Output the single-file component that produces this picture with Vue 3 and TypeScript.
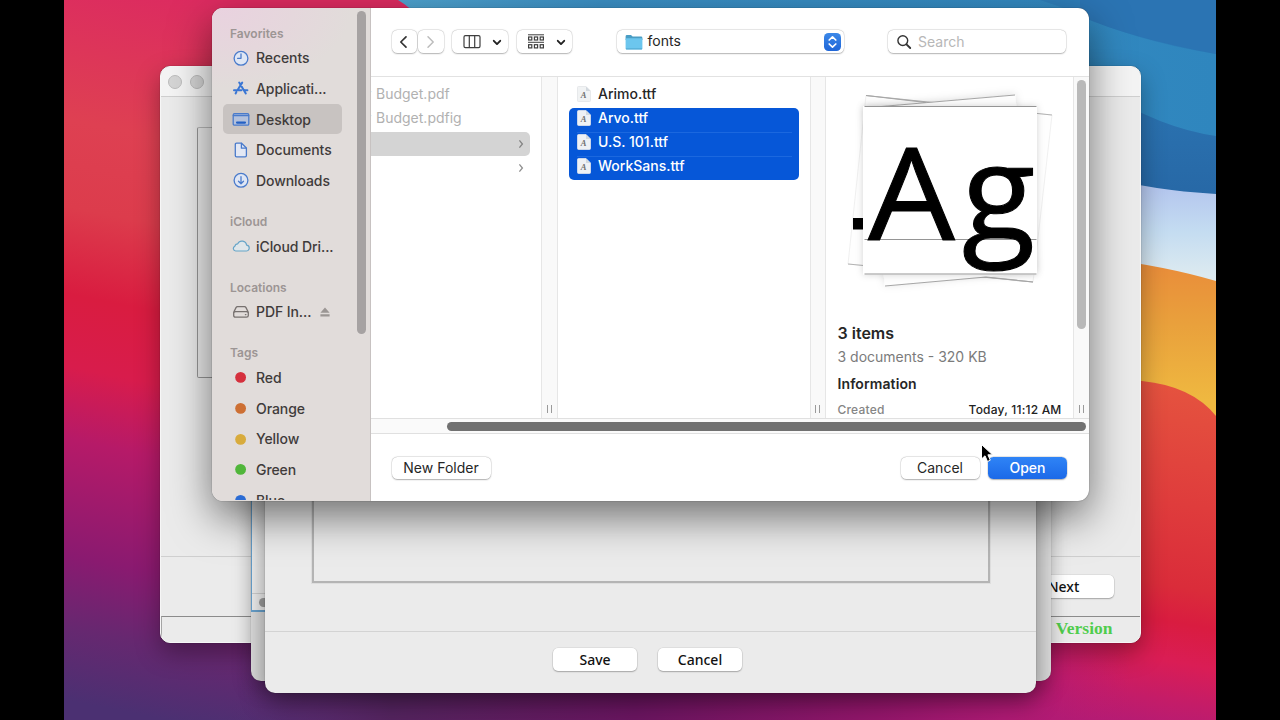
<script setup lang="ts">
interface SideItem {
  label: string
  icon: 'clock' | 'apps' | 'desktop' | 'doc' | 'download' | 'cloud' | 'disk' | 'tag'
  active?: boolean
  eject?: boolean
  color?: string
}
interface SideSection {
  title: string
  items: SideItem[]
}
interface FontFile {
  name: string
  selected: boolean
}

const sections: SideSection[] = [
  {
    title: 'Favorites',
    items: [
      { label: 'Recents', icon: 'clock' },
      { label: 'Applicati...', icon: 'apps' },
      { label: 'Desktop', icon: 'desktop', active: true },
      { label: 'Documents', icon: 'doc' },
      { label: 'Downloads', icon: 'download' },
    ],
  },
  { title: 'iCloud', items: [{ label: 'iCloud Dri...', icon: 'cloud' }] },
  { title: 'Locations', items: [{ label: 'PDF In...', icon: 'disk', eject: true }] },
  {
    title: 'Tags',
    items: [
      { label: 'Red', icon: 'tag', color: '#d5303d' },
      { label: 'Orange', icon: 'tag', color: '#cd6f33' },
      { label: 'Yellow', icon: 'tag', color: '#d8ab3c' },
      { label: 'Green', icon: 'tag', color: '#50b63a' },
      { label: 'Blue', icon: 'tag', color: '#2b6cd4' },
    ],
  },
]

const files: FontFile[] = [
  { name: 'Arimo.ttf', selected: false },
  { name: 'Arvo.ttf', selected: true },
  { name: 'U.S. 101.ttf', selected: true },
  { name: 'WorkSans.ttf', selected: true },
]
</script>

<template>
  <div class="screen">
    <svg class="wallpaper" viewBox="64 0 1152 720" width="1152" height="720">
      <defs>
        <linearGradient id="wl" gradientUnits="userSpaceOnUse" x1="200" y1="0" x2="64" y2="700">
          <stop offset="0" stop-color="#dc2b60" />
          <stop offset=".2" stop-color="#de4052" />
          <stop offset=".32" stop-color="#dc3c4c" />
          <stop offset=".44" stop-color="#d91c40" />
          <stop offset=".54" stop-color="#d81c4c" />
          <stop offset=".64" stop-color="#b61a68" />
          <stop offset=".8" stop-color="#8a1a70" />
          <stop offset=".9" stop-color="#662870" />
          <stop offset="1" stop-color="#4b3072" />
        </linearGradient>
        <linearGradient id="wb" gradientUnits="userSpaceOnUse" x1="64" y1="0" x2="1216" y2="0">
          <stop offset="0" stop-color="#4a3274" />
          <stop offset=".1" stop-color="#5f2a72" />
          <stop offset=".3" stop-color="#54245f" />
          <stop offset=".45" stop-color="#6a1560" />
          <stop offset=".62" stop-color="#8c1567" />
          <stop offset=".8" stop-color="#ae1a74" />
          <stop offset="1" stop-color="#c01c68" />
        </linearGradient>
        <linearGradient id="blue" x1="0" y1="0" x2="1" y2="0">
          <stop offset="0" stop-color="#4fa3cf" />
          <stop offset=".25" stop-color="#3b8fc4" />
          <stop offset="1" stop-color="#2f86be" />
        </linearGradient>
        <linearGradient id="deep" x1="0" y1="0" x2="0" y2="1">
          <stop offset="0" stop-color="#2b74b2" />
          <stop offset="1" stop-color="#2768a6" />
        </linearGradient>
        <linearGradient id="sky" gradientUnits="userSpaceOnUse" x1="0" y1="188" x2="0" y2="275">
          <stop offset="0" stop-color="#b4c6ee" />
          <stop offset=".5" stop-color="#c4dcf1" />
          <stop offset="1" stop-color="#dceaf0" />
        </linearGradient>
        <linearGradient id="amber" gradientUnits="userSpaceOnUse" x1="0" y1="265" x2="0" y2="400">
          <stop offset="0" stop-color="#e98d3a" />
          <stop offset=".45" stop-color="#e9a13c" />
          <stop offset="1" stop-color="#efb840" />
        </linearGradient>
        <linearGradient id="coral" gradientUnits="userSpaceOnUse" x1="1190" y1="380" x2="1130" y2="730">
          <stop offset="0" stop-color="#e5543f" />
          <stop offset=".35" stop-color="#df3c3c" />
          <stop offset=".58" stop-color="#da2c3a" />
          <stop offset=".68" stop-color="#d91c40" />
          <stop offset=".79" stop-color="#da1d55" />
          <stop offset=".9" stop-color="#c41c68" />
          <stop offset="1" stop-color="#b21b76" />
        </linearGradient>
        <linearGradient id="floor" gradientUnits="userSpaceOnUse" x1="230" y1="0" x2="1130" y2="0">
          <stop offset="0" stop-color="#5a2a70" stop-opacity="0" />
          <stop offset=".18" stop-color="#54245f" />
          <stop offset=".45" stop-color="#6a1560" />
          <stop offset=".72" stop-color="#94166b" />
          <stop offset=".86" stop-color="#ae1a74" />
          <stop offset="1" stop-color="#b81b70" stop-opacity="0" />
        </linearGradient>
      </defs>
      <rect x="64" y="0" width="500" height="720" fill="url(#wl)" />
      <path d="M540 560H1040V720H540Z" fill="url(#wb)" />
      <path d="M398 0H1216V200H520Q450 30 398 0Z" fill="url(#blue)" />
      <path d="M690 0H1216V54Q1130 40 1070 10L1040 0Z" fill="#2c79b5" opacity=".7" />
      <path d="M1080 0H1216V54Q1130 38 1080 16Z" fill="#2b74b3" />
      <path d="M1100 90Q1160 128 1216 136V196H1100Z" fill="url(#deep)" />
      <path d="M1100 176Q1150 190 1216 194V285H1100Z" fill="url(#sky)" />
      <path d="M1100 258Q1165 266 1216 281V440H1100Z" fill="url(#amber)" />
      <path d="M1030 381H1142Q1192 386 1216 416V720H1030Z" fill="url(#coral)" />
      <path d="M230 600H1130V720H230Z" fill="url(#floor)" />
    </svg>

    <section class="window main-window">
      <header class="titlebar"><i class="light" /><i class="light" /></header>
      <div class="main-body"><div class="groupbox" /></div>
      <div class="wizard-row"><button class="java-btn next">Next</button></div>
      <footer class="status"><span>Version</span></footer>
    </section>

    <section class="window middle-sheet">
      <div class="list-pane"><div class="pane-scroll"><i /></div></div>
    </section>

    <section class="window front-sheet">
      <div class="front-body"><div class="inset" /></div>
      <footer class="front-actions">
        <button class="java-btn">Save</button>
        <button class="java-btn">Cancel</button>
      </footer>
    </section>

    <section class="window dialog">
      <aside class="sidebar">
        <nav class="side-list">
          <template v-for="s in sections" :key="s.title">
            <h3 class="side-title">{{ s.title }}</h3>
            <div v-for="it in s.items" :key="it.label" class="side-item" :class="{ active: it.active }">
              <svg class="side-icon" viewBox="0 0 18 18" width="18" height="18" fill="none" stroke="#4a7bcb" stroke-width="1.3" stroke-linecap="round" stroke-linejoin="round">
                <template v-if="it.icon === 'clock'">
                  <circle cx="9" cy="9.3" r="6.9" fill="#dfe6f4" />
                  <path d="M9 4.900V9.300H5.6" />
                </template>
                <template v-else-if="it.icon === 'apps'">
                  <path d="M7.2 3.6L13.8 14.4M10.2 3.6L5.6 11M4.4 13L3.6 14.4M2 11.2H9.4M12.4 11.2H15.4" stroke-width="2" stroke="#3a76d4" />
                </template>
                <template v-else-if="it.icon === 'desktop'">
                  <rect x="1.2" y="3.600" width="15.6" height="11.6" rx="1.3" fill="#b3c1dc" />
                  <path d="M1.5 5.500H16.5" stroke-width="1.6" />
                  <path d="M5 12.600H13" stroke-width="2.1" stroke="#2360c4" />
                </template>
                <template v-else-if="it.icon === 'doc'">
                  <path d="M4.6 2.2H9.6L14.4 7V14.6Q14.4 15.9 13.1 15.9H4.6Q3.3 15.9 3.3 14.6V3.5Q3.3 2.2 4.6 2.2Z" fill="#e3e8f4" />
                  <path d="M9.4 2.4V7.2H14.2" />
                </template>
                <template v-else-if="it.icon === 'download'">
                  <circle cx="9" cy="9.3" r="6.9" fill="#dfe6f4" />
                  <path d="M9 5.700V12.500M6.5 10.200L9 12.700L11.5 10.200" />
                </template>
                <template v-else-if="it.icon === 'cloud'">
                  <path d="M3.700 14H14A2.900 2.900 0 0 0 14.600 8.200A4.700 4.700 0 0 0 5.700 6.800A2.900 2.900 0 0 0 2.900 9.200A2.500 2.500 0 0 0 3.700 14Z" stroke="#67a5c8" fill="#dfe6ea" stroke-width="1.200" />
                </template>
                <template v-else-if="it.icon === 'disk'">
                  <path d="M5.6 3.6H12.4Q13.5 3.6 14 4.6L16.3 9.2V12.4Q16.3 14.2 14.5 14.2H3.5Q1.7 14.2 1.7 12.4V9.2L4 4.6Q4.5 3.6 5.6 3.6ZM2 9.4Q2.6 8.6 3.6 8.6H14.4Q15.4 8.6 16 9.4" stroke="#77716f" />
                  <path d="M13.4 11.6H13.9" stroke="#77716f" />
                </template>
                <circle v-else cx="8.6" cy="9.4" r="5.4" :fill="it.color" stroke="none" />
              </svg>
              <span>{{ it.label }}</span>
              <svg v-if="it.eject" class="eject" viewBox="0 0 10 10" width="10" height="10">
                <path d="M5 .5L9.6 5.8H.4ZM.4 7.2H9.6V9.6H.4Z" fill="#9b9694" />
              </svg>
            </div>
          </template>
        </nav>
        <i class="side-thumb" />
      </aside>

      <div class="panel">
        <header class="toolbar">
          <button class="tool nav">
            <svg viewBox="0 0 10 14" width="10" height="14"><path d="M7 1.8L1.8 7L7 12.2" fill="none" stroke="#333" stroke-width="1.7" stroke-linecap="round" stroke-linejoin="round" /></svg>
          </button>
          <button class="tool nav">
            <svg viewBox="0 0 10 14" width="10" height="14"><path d="M2 1.8L7.2 7L2 12.2" fill="none" stroke="#bcbcbc" stroke-width="1.5" stroke-linecap="round" stroke-linejoin="round" /></svg>
          </button>
          <button class="tool view">
            <svg viewBox="0 0 18 14" width="18" height="14" fill="none" stroke="#3f3f3f" stroke-width="1.2"><rect x="1" y=".6" width="16" height="12" rx="1.4" /><path d="M6.3 .6V12.600M11.7 .6V12.600" /></svg>
            <svg class="chev" viewBox="0 0 10 8" width="10" height="8"><path d="M1.8 1.8L5 5.1L8.2 1.8" fill="none" stroke="#222" stroke-width="1.9" stroke-linecap="round" stroke-linejoin="round" /></svg>
          </button>
          <button class="tool group">
            <svg viewBox="0 0 18 16" width="18" height="16" fill="none" stroke="#3f3f3f" stroke-width="1.2">
              <path d="M1 .8H17M1 8.300H17" stroke-width="1" />
              <rect x="1.6" y="3" width="3.2" height="3" /><rect x="7.4" y="3" width="3.2" height="3" /><rect x="13.2" y="3" width="3.2" height="3" />
              <rect x="1.6" y="10.7" width="3.2" height="3.2" /><rect x="7.4" y="10.7" width="3.2" height="3.2" /><rect x="13.2" y="10.7" width="3.2" height="3.2" />
            </svg>
            <svg class="chev" viewBox="0 0 10 8" width="10" height="8"><path d="M1.8 1.8L5 5.1L8.2 1.8" fill="none" stroke="#222" stroke-width="1.9" stroke-linecap="round" stroke-linejoin="round" /></svg>
          </button>
          <div class="tool path">
            <svg viewBox="0 0 18 16" width="18" height="16">
              <path d="M.6 2.4Q.6 1 2 1H6L7.6 2.6H16Q17.4 2.6 17.4 4V6H.6Z" fill="#4a9dc4" />
              <rect x=".6" y="4.2" width="16.8" height="11.2" rx="1.2" fill="#6cc6ee" />
              <path d="M1 14.9H17" stroke="#4fa6cf" stroke-width="1" />
            </svg>
            <span>fonts</span>
            <i class="stepper">
              <svg viewBox="0 0 17 18" width="17" height="18"><path d="M5.2 7L8.5 3.9L11.8 7M5.2 11L8.5 14.1L11.8 11" fill="none" stroke="#fff" stroke-width="1.7" stroke-linecap="round" stroke-linejoin="round" /></svg>
            </i>
          </div>
          <div class="tool search">
            <svg viewBox="0 0 16 16" width="16" height="16" fill="none" stroke="#333" stroke-linecap="round"><circle cx="6.8" cy="6.6" r="4.9" stroke-width="1.4" /><path d="M10.5 10.3L14.2 14" stroke-width="1.9" /></svg>
            <span>Search</span>
          </div>
        </header>

        <div class="columns">
          <div class="col first">
            <div class="dim"><span>r Budget.pdf</span></div>
            <div class="dim"><span>r Budget.pdfig</span></div>
            <div class="folder picked"><svg viewBox="0 0 6 10" width="6" height="10"><path d="M1.4 1.4L4.4 5L1.4 8.6" fill="none" stroke="#838383" stroke-width="1.3" /></svg></div>
            <div class="folder"><svg viewBox="0 0 6 10" width="6" height="10"><path d="M1.4 1.4L4.4 5L1.4 8.6" fill="none" stroke="#8f8f8f" stroke-width="1.3" /></svg></div>
          </div>
          <div class="gutter"><i /><i /></div>
          <div class="col second">
            <div v-for="f in files" :key="f.name" class="file" :class="{ selected: f.selected }">
              <svg viewBox="0 0 14 16" width="14" height="16">
                <path d="M1.5 .5H9L13.5 5V14.5Q13.5 15.5 12.5 15.5H1.5Q.5 15.5 .5 14.5V1.5Q.5 .5 1.5 .5Z" :fill="f.selected ? '#eef1f5' : '#f1f3f4'" :stroke="f.selected ? '#dfe5ee' : '#e2e5e7'" stroke-width=".8" />
                <path d="M9 .5V5H13.5Z" fill="#d3d9de" />
                <text x="3.800" y="12" class="mini">A</text>
              </svg>
              <span>{{ f.name }}</span>
            </div>
          </div>
          <div class="gutter mid"><i /><i /></div>
          <div class="col preview">
            <svg class="sheets" viewBox="0 0 216 206" width="216" height="206">
              <defs>
                <filter id="sh" x="-20%" y="-20%" width="140%" height="140%"><feDropShadow dx="0" dy="0" stdDeviation="3.500" flood-opacity=".17" /></filter>
                <filter id="sh2" x="-20%" y="-20%" width="140%" height="140%"><feDropShadow dx="0" dy="-1" stdDeviation="4.500" flood-opacity=".13" /></filter>
              </defs>
              <path d="M40 18.500L226 38L207 205L22 187Z" fill="#fefefe" stroke="#ececec" stroke-width=".8" />
              <path d="M40 18.500L226 38M22 187L207 205" stroke="#b4b4b4" stroke-width="1.100" />
              <path d="M38 31L189 18L210 195L59 209Z" fill="#fdfdfd" filter="url(#sh2)" />
              <path d="M40 18.500L100 25.500M38 31L189 18M59 209L160 200L207 205" fill="none" stroke="#a6a6a6" stroke-width="1.100" />
              <rect x="27" y="141" width="12" height="11.500" fill="#000" />
              <rect x="37" y="29" width="174" height="168.500" fill="#fff" filter="url(#sh)" />
              <path d="M38.500 29.500H210.500M38.500 162.500H210.500M38.500 197H210.500" stroke="#959595" stroke-width="1.200" />
              <g class="specimen">
                <text transform="translate(42 163) scale(1.050 .985)">A</text>
                <text transform="translate(136 161.500) scale(1.030 1)">g</text>
              </g>
            </svg>
            <div class="preview-info">
              <h2>3 items</h2>
              <p>3 documents - 320 KB</p>
              <h4>Information</h4>
              <div class="meta"><span>Created</span><b>Today, 11:12 AM</b></div>
            </div>
          </div>
          <div class="gutter end"><em /><i /><i /></div>
        </div>

        <div class="hscroll"><i /></div>

        <footer class="actions">
          <button class="btn new">New Folder</button>
          <button class="btn cancel">Cancel</button>
          <button class="btn open">Open</button>
        </footer>
      </div>
    </section>

    <svg class="cursor" viewBox="0 0 14 20" width="14" height="20">
      <path d="M1.500 1.500V16L5 12.800L7.500 18.500L10.300 17.200L7.900 11.800H12.500Z" fill="#000" stroke="#fff" stroke-width="1" stroke-linejoin="round" />
    </svg>
  </div>
</template>

<style>
html,
body {
  margin: 0;
  background: #000;
  overflow: hidden;
}
</style>

<style scoped>
* {
  box-sizing: border-box;
}
.screen {
  position: relative;
  width: 1280px;
  height: 720px;
  overflow: hidden;
  background: #000;
  font-family: Inter, "Liberation Sans", sans-serif;
  font-size: 14px;
  color: #262626;
}
.wallpaper {
  display: block;
  margin-left: 64px;
}
h2, h3, h4, p {
  margin: 0;
}
button {
  font: inherit;
  color: inherit;
  border: 0;
  padding: 0;
}
.window {
  position: absolute;
  display: flex;
  flex-direction: column;
  background: #ebebeb;
}

.main-window {
  left: 160px;
  top: 66px;
  width: 981px;
  height: 577px;
  border-radius: 10px;
  overflow: hidden;
  box-shadow: 0 0 1px rgba(0, 0, 0, 0.6), 0 10px 24px rgba(0, 0, 0, 0.34);
  border: 1px solid #f6f6f6;
}
.titlebar {
  height: 30px;
  flex: none;
  display: flex;
  gap: 8px;
  padding: 8px 7px;
  background: #f4f4f4;
  border-bottom: 1px solid #cfcfcf;
}
.light {
  width: 14px;
  height: 14px;
  border-radius: 50%;
  background: #d5d5d5;
  border: 1px solid #bcbcbc;
}
.main-body {
  height: 460px;
  flex: none;
  padding: 30px 36px 0;
  border-bottom: 1px solid #cfcfcf;
}
.groupbox {
  width: 500px;
  height: 251px;
  border: 1px solid #969696;
  border-top-color: #b8b8b8;
  border-radius: 2px;
}
.wizard-row {
  height: 59px;
  flex: none;
  display: flex;
  justify-content: flex-end;
  padding: 18px 26px 0 0;
}
.status {
  flex: 1;
  border-top: 1px solid #8b8b8b;
  border-left: 1px solid #a5a5a5;
  display: flex;
  justify-content: flex-end;
  padding: 1px 27.5px 0 0;
  font: bold 17.5px/21px "Liberation Serif", serif;
  color: #50cd4d;
}
.java-btn {
  width: 84px;
  height: 23px;
  border-radius: 5px;
  background: #fff;
  box-shadow: 0 0 0 0.5px rgba(0, 0, 0, 0.1), 0 1px 1.5px rgba(0, 0, 0, 0.26);
  font: 500 14px/22px "Noto Sans", sans-serif;
  color: #111;
}
.java-btn.next {
  width: 101px;
}

.middle-sheet {
  left: 251px;
  top: 100px;
  width: 800px;
  height: 581px;
  border-radius: 0 0 10px 10px;
  box-shadow: 0 0 1px rgba(0, 0, 0, 0.5), 0 8px 20px rgba(0, 0, 0, 0.22);
  background: #dedede;
}
.list-pane {
  width: 400px;
  height: 512px;
  display: flex;
  flex-direction: column;
  justify-content: flex-end;
  background: #f2f2f2;
  border: solid #69a3cf;
  border-width: 0 0 2px 1px;
}
.pane-scroll {
  height: 17px;
  padding: 4px 7px;
  border-top: 1px solid #d2d2d2;
}
.pane-scroll i {
  display: block;
  width: 200px;
  height: 9px;
  border-radius: 5px;
  background: #a0a0a0;
}

.front-sheet {
  left: 265px;
  top: 100px;
  width: 771px;
  height: 593px;
  border-radius: 0 0 10px 10px;
  box-shadow: 0 0 1px rgba(0, 0, 0, 0.6), 0 8px 26px rgba(0, 0, 0, 0.45);
}
.front-body {
  height: 532px;
  flex: none;
  padding: 0 46px 0 47px;
  border-bottom: 1px solid #d3d3d3;
}
.inset {
  height: 483px;
  border: 2px solid #b4b4b4;
  box-shadow: 0 0 0 1px #dedede;
}
.front-actions {
  display: flex;
  justify-content: center;
  gap: 21px;
  padding: 16px 6px 0 0;
}

.dialog {
  left: 212px;
  top: 8px;
  width: 877px;
  height: 493px;
  flex-direction: row;
  background: #fff;
  border-radius: 11px;
  box-shadow: 0 0 1px rgba(0, 0, 0, 0.7), 0 16px 42px rgba(0, 0, 0, 0.52);
}
.sidebar {
  width: 158.5px;
  flex: none;
  display: flex;
  justify-content: space-between;
  border-right: 1px solid #c7c2c1;
  border-radius: 11px 0 0 11px;
  overflow: hidden;
  background: radial-gradient(ellipse 130px 80px at 10px 0, #e9d2df 0, #e5d7dc 55%, #e1dcda 100%);
}
.side-list {
  width: 130px;
  height: 493px;
  margin-top: -0.6px;
  overflow: hidden;
}
.side-title {
  height: 35px;
  padding: 16.3px 0 0 18px;
  font-size: 12px;
  font-weight: 600;
  line-height: 20px;
  color: #9c9594;
}
.side-item {
  height: 30.68px;
  display: flex;
  align-items: center;
  gap: 6px;
  margin-left: 11px;
  padding-left: 9px;
  border-radius: 5px;
  color: #3f3b3a;
  font-weight: 450;
  letter-spacing: -0.08px;
  white-space: nowrap;
}
.side-item.active {
  background: #c8c3c1;
}
.side-icon {
  flex: none;
}
.eject {
  margin: 1px 0 0 3px;
}
.side-thumb {
  width: 9px;
  height: 323px;
  margin: 3px 3.5px 0 0;
  border-radius: 5px;
  background: #a6a2a2;
}

.panel {
  width: 718px;
  flex: none;
  display: flex;
  flex-direction: column;
}
.toolbar {
  height: 69px;
  flex: none;
  display: flex;
  padding: 22px 0 0 21px;
  border-bottom: 1px solid #e2e2e2;
}
.tool {
  height: 23px;
  display: flex;
  align-items: center;
  background: #fff;
  border-radius: 5.5px;
  box-shadow: 0 0 0 0.5px rgba(0, 0, 0, 0.1), 0 0.5px 1.5px rgba(0, 0, 0, 0.26);
}
.tool span {
  margin-top: -1.5px;
}
.nav {
  width: 25.5px;
  justify-content: center;
  margin-right: 1px;
}
.view {
  width: 56px;
  margin-left: 7.5px;
  padding-left: 10.5px;
}
.group {
  width: 55px;
  margin-left: 9px;
  padding-left: 9.5px;
}
.chev {
  margin: 2px 0 0 11px;
}
.path {
  width: 227px;
  margin-left: 44.5px;
  padding: 0 3px 0 8px;
  gap: 5px;
}
.stepper {
  display: flex;
  width: 17px;
  height: 18px;
  margin-left: auto;
  border-radius: 4.5px;
  background: linear-gradient(#3b88e8, #1f66d8);
}
.search {
  width: 178px;
  margin-left: 44.5px;
  padding-left: 7.5px;
  gap: 6.5px;
  color: #b7b7b7;
}
.search span {
  margin-top: 0;
}
.columns {
  height: 341px;
  flex: none;
  display: flex;
}
.col {
  flex: none;
  overflow: hidden;
}
.first {
  width: 170px;
  padding-top: 6px;
}
.dim {
  height: 24.3px;
  display: flex;
  align-items: center;
  padding-bottom: 4px;
  color: #b1b1b1;
  white-space: nowrap;
}
.dim span {
  margin-left: -4.5px;
  word-spacing: 0.8px;
}
.folder {
  height: 24px;
  width: 159px;
  display: flex;
  align-items: center;
  justify-content: flex-end;
  padding-right: 6px;
}
.picked {
  background: #d4d4d4;
  border-radius: 0 5px 5px 0;
}
.gutter {
  width: 17px;
  flex: none;
  display: flex;
  align-items: flex-end;
  justify-content: center;
  gap: 3px;
  padding-bottom: 5px;
  background: #f9f9f9;
  border: solid #e6e6e6;
  border-width: 0 1px;
}
.gutter.mid {
  width: 16px;
}
.gutter i {
  width: 1px;
  height: 8px;
  background: #9a9a9a;
}
.second {
  width: 252px;
  padding: 6.5px 11px 0 11px;
}
.file {
  height: 24.1px;
  display: flex;
  align-items: center;
  gap: 7.5px;
  padding: 0 0 3px 8px;
  font-weight: 500;
}
.file span {
  margin-top: -1.5px;
}
.file.selected {
  background: #0657d8;
  color: #fff;
}
.file.selected + .file.selected {
  background: linear-gradient(#1b68df, #1b68df) 8px 0 / 215px 1px no-repeat #0657d8;
}
.file:nth-child(2) {
  border-radius: 5px 5px 0 0;
}
.file.file:last-child {
  border-radius: 0 0 5px 5px;
}
.mini {
  font: italic bold 8.5px "Liberation Serif", serif;
  fill: #6f6f6f;
}
.specimen {
  font: 400 131px "Open Sans", sans-serif;
  fill: #000;
  stroke: #000;
  stroke-width: 1px;
}
.preview {
  width: 247px;
  display: flex;
  flex-direction: column;
}
.sheets {
  flex: none;
  overflow: visible;
}
.preview-info {
  padding: 39px 11px 0 12px;
}
.preview-info h2 {
  font-size: 16px;
  font-weight: 600;
  line-height: 22px;
}
.preview-info p {
  margin-top: 1px;
  line-height: 24px;
  color: #7b7b7b;
}
.preview-info h4 {
  margin-top: 4px;
  font-size: 14px;
  font-weight: 600;
  line-height: 22px;
  letter-spacing: 0.1px;
}
.meta {
  display: flex;
  justify-content: space-between;
  margin-top: 5px;
  font-size: 12px;
  font-weight: 500;
  line-height: 20px;
  letter-spacing: 0.2px;
  color: #858585;
}
.meta b {
  font-weight: 550;
  color: #222;
}
.end {
  position: relative;
  width: 16px;
  border-right: 0;
}
.end em {
  position: absolute;
  left: 3px;
  top: 3px;
  width: 9px;
  height: 249px;
  border-radius: 5px;
  background: #b9b9b9;
}
.hscroll {
  height: 16px;
  flex: none;
  display: flex;
  justify-content: flex-end;
  padding: 3px 3px 0 0;
  background: #fafafa;
  border: solid #e0e0e0;
  border-width: 1px 0;
}
.hscroll i {
  width: 639px;
  height: 9px;
  border-radius: 5px;
  background: #717171;
}
.actions {
  display: flex;
  padding: 23px 21.5px 0 21px;
}
.btn {
  height: 22px;
  border-radius: 5.5px;
  background: #fff;
  box-shadow: 0 0 0 0.5px rgba(0, 0, 0, 0.1), 0 0.5px 1.5px rgba(0, 0, 0, 0.28);
  line-height: 22px;
}
.new {
  width: 99px;
}
.cancel {
  width: 79px;
  margin-left: auto;
}
.open {
  width: 79px;
  margin-left: 8.5px;
  color: #fff;
  font-weight: 500;
  background: linear-gradient(#2f84f6, #1c69e8);
}
.cursor {
  position: absolute;
  left: 980px;
  top: 442.5px;
}
</style>
